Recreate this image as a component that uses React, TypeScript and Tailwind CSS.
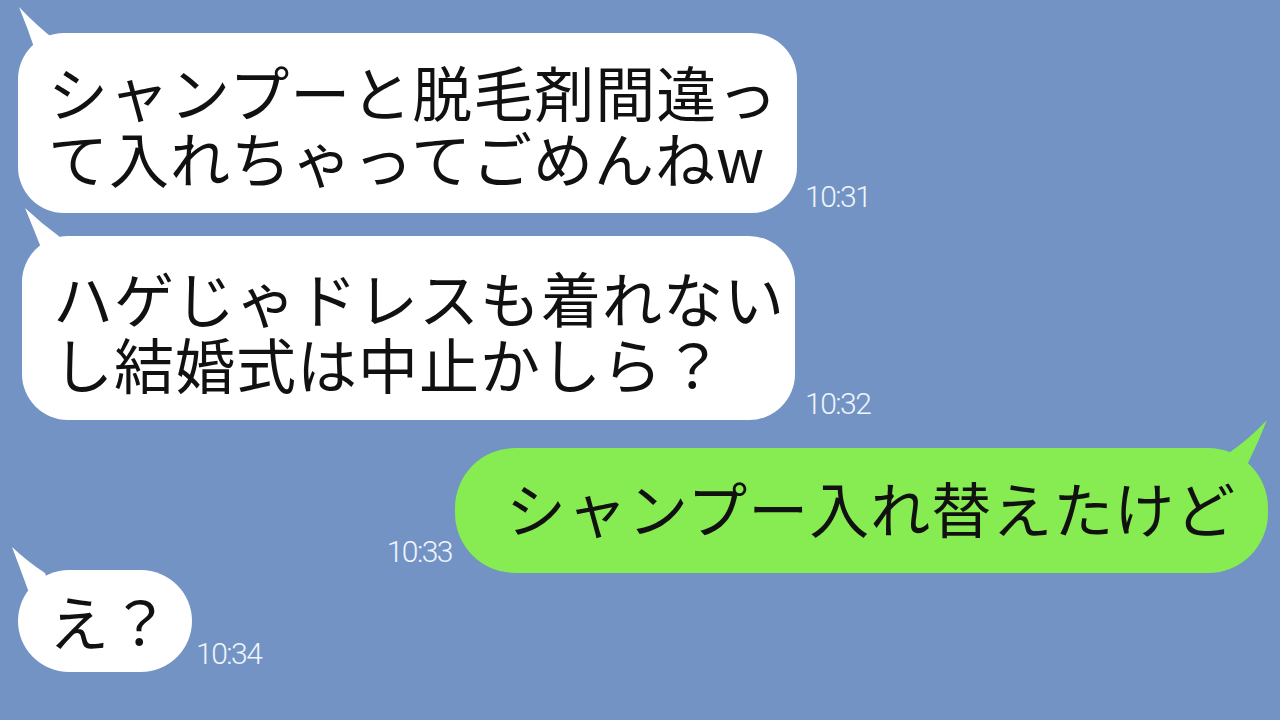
import React from "react";

const jp = { fontFamily: '"Noto Sans CJK JP", "Noto Sans", sans-serif' };
const ts = { fontFamily: 'Roboto, "Noto Sans", sans-serif' };

function Tail({
  className,
  w,
  h,
  d,
  fill,
}: {
  className: string;
  w: number;
  h: number;
  d: string;
  fill: string;
}) {
  return (
    <svg
      className={className}
      width={w}
      height={h}
      viewBox={`0 0 ${w} ${h}`}
      aria-hidden
    >
      <path d={d} fill={fill} />
    </svg>
  );
}

function Time({ t, className }: { t: string; className?: string }) {
  return (
    <div
      style={ts}
      className={
        "text-[30px] leading-[30px] tracking-[-1.5px] font-light text-[#f0f5fc] whitespace-nowrap " +
        (className ?? "")
      }
    >
      {t}
    </div>
  );
}

export default function App() {
  return (
    <div className="w-[1280px] h-[720px] overflow-hidden bg-[#7293c3] flex flex-col">
      {/* Row 1 */}
      <div className="mt-[33px] pl-[18px] flex items-end gap-[8px]">
        <div className="relative">
          <Tail
            className="absolute left-0 top-[-30px]"
            w={60}
            h={64}
            fill="#ffffff"
            d="M1 4 Q10 26 17 47 L48 60 L37 37 Q18 22 1 4 Z"
          />
          <div
            style={jp}
            className="relative w-[779px] h-[180px] bg-white rounded-[46px] pl-[30px] pt-[25px] text-[60px] tracking-[1px] leading-[66px] text-[#111] whitespace-nowrap"
          >
            シャンプーと脱毛剤間違っ
            <br />
            て入れちゃってごめんねw
          </div>
        </div>
        <Time t="10:31" className="mb-[1px]" />
      </div>

      {/* Row 2 */}
      <div className="mt-[23px] pl-[22px] flex items-end gap-[10px]">
        <div className="relative">
          <Tail
            className="absolute left-0 top-[-28px]"
            w={64}
            h={64}
            fill="#ffffff"
            d="M3 0 Q12 22 20 42 L48 58 L38 29 Q20 16 3 0 Z"
          />
          <div
            style={jp}
            className="relative w-[773px] h-[184px] bg-white rounded-[46px] pl-[31px] pt-[28px] text-[60px] tracking-[1px] leading-[66px] text-[#111] whitespace-nowrap"
          >
            ハゲじゃドレスも着れない
            <br />
            し結婚式は中止かしら？
          </div>
        </div>
        <Time t="10:32" className="mb-[1px]" />
      </div>

      {/* Row 3 */}
      <div className="mt-[28px] pr-[12px] flex justify-end items-end gap-[3px]">
        <Time t="10:33" className="mb-[6px]" />
        <div className="relative">
          <Tail
            className="absolute right-0 top-[-30px]"
            w={60}
            h={70}
            fill="#86ec52"
            d="M59 2 Q40 22 22 34 L20 64 L42 64 L40 45 Q50 25 59 2 Z"
          />
          <div
            style={jp}
            className="relative w-[813px] h-[125px] bg-[#86ec52] rounded-[60px] pl-[51px] pt-[26px] text-[60px] tracking-[1px] leading-[66px] text-[#111] whitespace-nowrap"
          >
            シャンプー入れ替えたけど
          </div>
        </div>
      </div>

      {/* Row 4 */}
      <div className="mt-[-3px] pl-[18px] flex items-end gap-[4px]">
        <div className="relative">
          <Tail
            className="absolute left-[-10px] top-[-30px]"
            w={60}
            h={64}
            fill="#ffffff"
            d="M4 7 Q12 28 20 50 L46 58 L37 33 Q20 22 4 7 Z"
          />
          <div
            style={jp}
            className="relative w-[174px] h-[102px] bg-white rounded-[51px] pl-[31px] pt-[17px] text-[60px] tracking-[1px] leading-[66px] text-[#111] whitespace-nowrap"
          >
            え？
          </div>
        </div>
        <Time t="10:34" className="mb-[3px]" />
      </div>
    </div>
  );
}
